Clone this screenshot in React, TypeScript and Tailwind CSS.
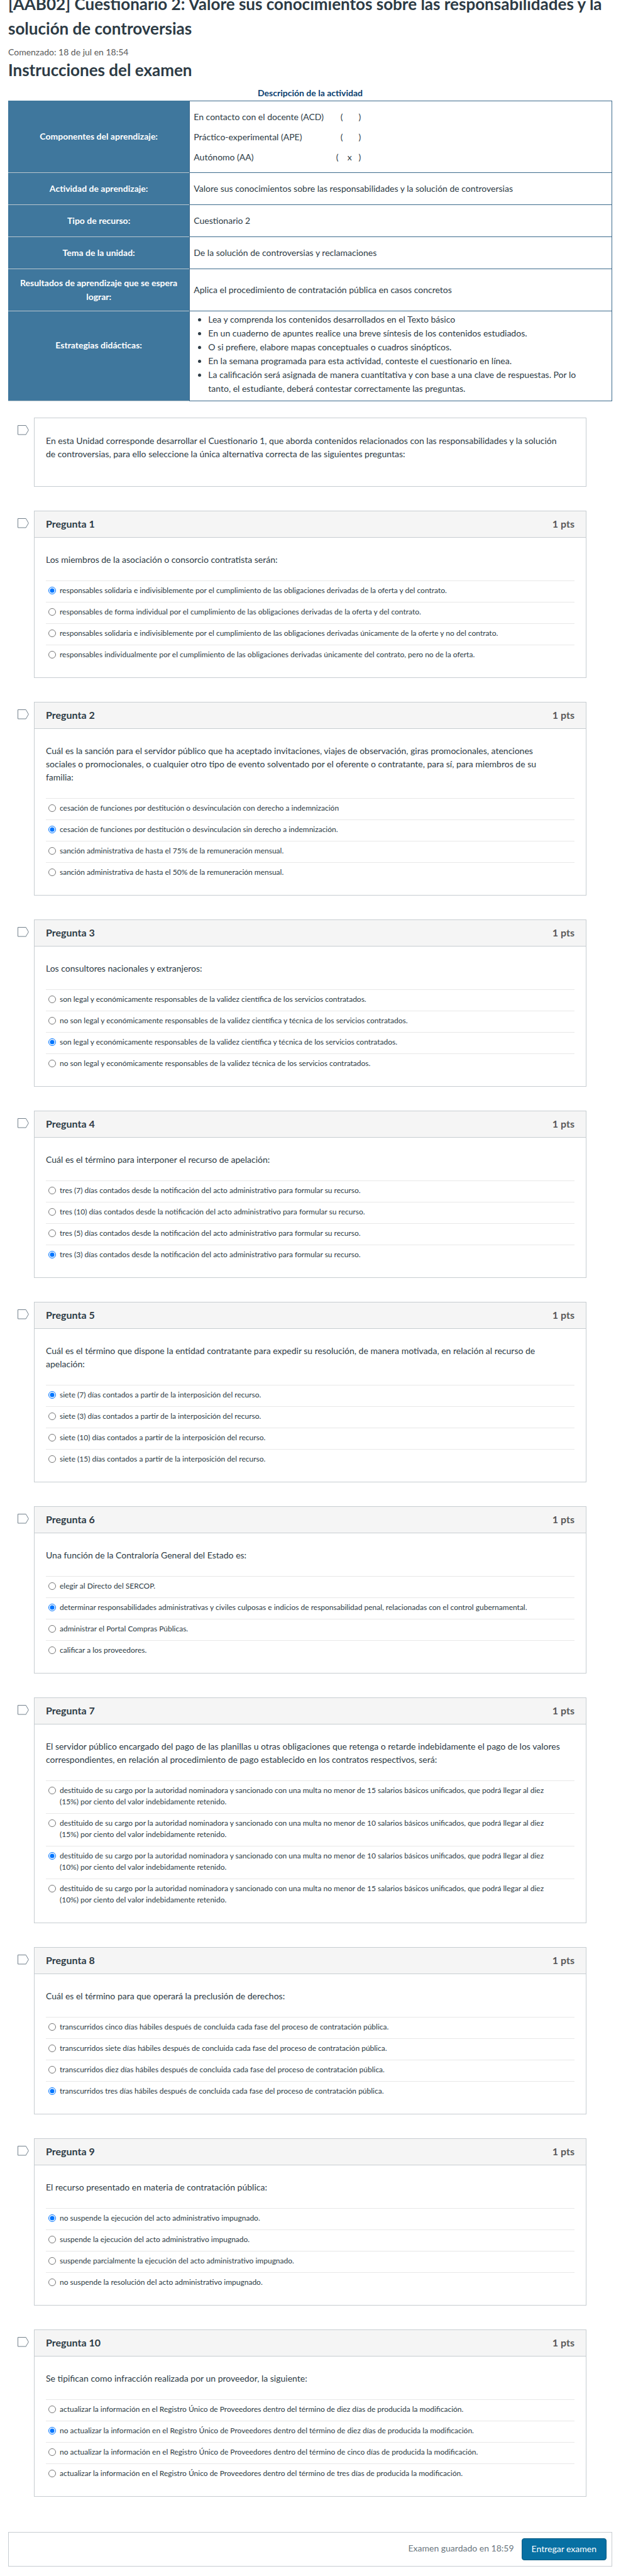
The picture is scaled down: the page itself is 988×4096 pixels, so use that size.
import { useState } from "react";
import type { ReactNode } from "react";

interface Question {
  id: number;
  text: string;
  options: string[];
  selected: number;
}

const questions: Question[] = [
  {
    id: 1,
    text: "Los miembros de la asociación o consorcio contratista serán:",
    options: [
      "responsables solidaria e indivisiblemente por el cumplimiento de las obligaciones derivadas de la oferta y del contrato.",
      "responsables de forma individual por el cumplimiento de las obligaciones derivadas de la oferta y del contrato.",
      "responsables solidaria e indivisiblemente por el cumplimiento de las obligaciones derivadas únicamente de la oferte y no del contrato.",
      "responsables individualmente por el cumplimiento de las obligaciones derivadas únicamente del contrato, pero no de la oferta.",
    ],
    selected: 0,
  },
  {
    id: 2,
    text: "Cuál es la sanción para el servidor público que ha aceptado invitaciones, viajes de observación, giras promocionales, atenciones sociales o promocionales, o cualquier otro tipo de evento solventado por el oferente o contratante, para sí, para miembros de su familia:",
    options: [
      "cesación de funciones por destitución o desvinculación con derecho a indemnización",
      "cesación de funciones por destitución o desvinculación sin derecho a indemnización.",
      "sanción administrativa de hasta el 75% de la remuneración mensual.",
      "sanción administrativa de hasta el 50% de la remuneración mensual.",
    ],
    selected: 1,
  },
  {
    id: 3,
    text: "Los consultores nacionales y extranjeros:",
    options: [
      "son legal y económicamente responsables de la validez científica de los servicios contratados.",
      "no son legal y económicamente responsables de la validez científica y técnica de los servicios contratados.",
      "son legal y económicamente responsables de la validez científica y técnica de los servicios contratados.",
      "no son legal y económicamente responsables de la validez técnica de los servicios contratados.",
    ],
    selected: 2,
  },
  {
    id: 4,
    text: "Cuál es el término para interponer el recurso de apelación:",
    options: [
      "tres (7) días contados desde la notificación del acto administrativo para formular su recurso.",
      "tres (10) días contados desde la notificación del acto administrativo para formular su recurso.",
      "tres (5) días contados desde la notificación del acto administrativo para formular su recurso.",
      "tres (3) días contados desde la notificación del acto administrativo para formular su recurso.",
    ],
    selected: 3,
  },
  {
    id: 5,
    text: "Cuál es el término que dispone la entidad contratante para expedir su resolución, de manera motivada, en relación al recurso de apelación:",
    options: [
      "siete (7) días contados a partir de la interposición del recurso.",
      "siete (3) días contados a partir de la interposición del recurso.",
      "siete (10) días contados a partir de la interposición del recurso.",
      "siete (15) días contados a partir de la interposición del recurso.",
    ],
    selected: 0,
  },
  {
    id: 6,
    text: "Una función de la Contraloría General del Estado es:",
    options: [
      "elegir al Directo del SERCOP.",
      "determinar responsabilidades administrativas y civiles culposas e indicios de responsabilidad penal, relacionadas con el control gubernamental.",
      "administrar el Portal Compras Públicas.",
      "calificar a los proveedores.",
    ],
    selected: 1,
  },
  {
    id: 7,
    text: "El servidor público encargado del pago de las planillas u otras obligaciones que retenga o retarde indebidamente el pago de los valores correspondientes, en relación al procedimiento de pago establecido en los contratos respectivos, será:",
    options: [
      "destituido de su cargo por la autoridad nominadora y sancionado con una multa no menor de 15 salarios básicos unificados, que podrá llegar al diez (15%) por ciento del valor indebidamente retenido.",
      "destituido de su cargo por la autoridad nominadora y sancionado con una multa no menor de 10 salarios básicos unificados, que podrá llegar al diez (15%) por ciento del valor indebidamente retenido.",
      "destituido de su cargo por la autoridad nominadora y sancionado con una multa no menor de 10 salarios básicos unificados, que podrá llegar al diez (10%) por ciento del valor indebidamente retenido.",
      "destituido de su cargo por la autoridad nominadora y sancionado con una multa no menor de 15 salarios básicos unificados, que podrá llegar al diez (10%) por ciento del valor indebidamente retenido.",
    ],
    selected: 2,
  },
  {
    id: 8,
    text: "Cuál es el término para que operará la preclusión de derechos:",
    options: [
      "transcurridos cinco días hábiles después de concluida cada fase del proceso de contratación pública.",
      "transcurridos siete días hábiles después de concluida cada fase del proceso de contratación pública.",
      "transcurridos diez días hábiles después de concluida cada fase del proceso de contratación pública.",
      "transcurridos tres días hábiles después de concluida cada fase del proceso de contratación pública.",
    ],
    selected: 3,
  },
  {
    id: 9,
    text: "El recurso presentado en materia de contratación pública:",
    options: [
      "no suspende la ejecución del acto administrativo impugnado.",
      "suspende la ejecución del acto administrativo impugnado.",
      "suspende parcialmente la ejecución del acto administrativo impugnado.",
      "no suspende la resolución del acto administrativo impugnado.",
    ],
    selected: 0,
  },
  {
    id: 10,
    text: "Se tipifican como infracción realizada por un proveedor, la siguiente:",
    options: [
      "actualizar la información en el Registro Único de Proveedores dentro del término de diez días de producida la modificación.",
      "no actualizar la información en el Registro Único de Proveedores dentro del término de diez días de producida la modificación.",
      "no actualizar la información en el Registro Único de Proveedores dentro del término de cinco días de producida la modificación.",
      "actualizar la información en el Registro Único de Proveedores dentro del término de tres días de producida la modificación.",
    ],
    selected: 1,
  },
];

const components = [
  { label: "En contacto con el docente (ACD)", mark: "(       )" },
  { label: "Práctico-experimental (APE)", mark: "(       )" },
  { label: "Autónomo (AA)", mark: "(    x   )" },
];

const strategies = [
  "Lea y comprenda los contenidos desarrollados en el Texto básico",
  "En un cuaderno de apuntes realice una breve síntesis de los contenidos estudiados.",
  "O si prefiere, elabore mapas conceptuales o cuadros sinópticos.",
  "En la semana programada para esta actividad, conteste el cuestionario en línea.",
  "La calificación será asignada de manera cuantitativa y con base a una clave de respuestas. Por lo tanto, el estudiante, deberá contestar correctamente las preguntas.",
];

function Row({
  label,
  labelClass = "",
  className = "",
  children,
}: {
  label: string;
  labelClass?: string;
  className?: string;
  children: ReactNode;
}) {
  return (
    <tr>
      <th
        scope="row"
        className={`w-[30%] border-b border-[#b9c6cd] bg-[#3f779d] px-3 font-bold text-white ${labelClass}`}
      >
        {label}
      </th>
      <td className={`border-x border-b border-[#3c6a8c] px-[6px] ${className}`}>
        {children}
      </td>
    </tr>
  );
}

function Flagged({ children }: { children: ReactNode }) {
  const [flagged, setFlagged] = useState(false);

  return (
    <div className="mb-[38px] flex items-start gap-2 pl-[15px] pr-[41px]">
      <button
        type="button"
        aria-label="Marcar pregunta"
        aria-pressed={flagged}
        onClick={() => setFlagged(!flagged)}
        className="mt-3 shrink-0"
      >
        <svg width="18" height="16" viewBox="0 0 18 16" className="block">
          <path
            d="M0.5 0.5H13.2L17.4 7.8L13.2 15H0.5Z"
            fill={flagged ? "#fc5e13" : "#fff"}
            stroke="#73818c"
          />
        </svg>
      </button>
      <div className="min-w-0 flex-1 border border-[#c7cdd1]">{children}</div>
    </div>
  );
}

function QuestionCard({ question }: { question: Question }) {
  const [selected, setSelected] = useState(question.selected);
  const textId = `texto-${question.id}`;

  return (
    <Flagged>
      <div className="flex h-[42px] items-center justify-between border-b border-[#c7cdd1] bg-[#f5f5f5] px-[18px] pb-[2px] text-base font-bold">
        <h3>Pregunta {question.id}</h3>
        <span className="text-[#595959]">1 pts</span>
      </div>
      <div
        role="radiogroup"
        aria-labelledby={textId}
        className="px-[18px] pb-[18px] pt-6"
      >
        <p id={textId} className="mb-[23px] mr-5">
          {question.text}
        </p>
        {question.options.map((option, i) => (
          <label
            key={i}
            className="flex items-start gap-[6px] border-t border-[#e8e8e8] pb-[9px] pl-1 pr-6 pt-[6px] text-xs leading-[18px]"
          >
            <input
              type="radio"
              name={`pregunta-${question.id}`}
              checked={selected === i}
              onChange={() => setSelected(i)}
              className="mt-[3px] size-3 shrink-0"
            />
            <span>{option}</span>
          </label>
        ))}
      </div>
    </Flagged>
  );
}

export default function App() {
  return (
    <main className="overflow-hidden bg-white pb-[15px] pl-[13px] pr-[14px] font-['Lato',sans-serif] text-[14px] leading-[21px] text-[#2d3b45]">
      <header>
        <h1 className="-mt-[13px] text-[26px] font-bold leading-[39px]">
          [AAB02] Cuestionario 2: Valore sus conocimientos sobre las
          responsabilidades y la solución de controversias
        </h1>
        <p className="mt-[7px] text-[#595959]">Comenzado: 18 de jul en 18:54</p>
        <h2 className="text-[26px] font-bold leading-9">
          Instrucciones del examen
        </h2>
      </header>

      <table className="mb-[26px] mt-2 w-full table-fixed border-separate border-spacing-0 leading-[22px]">
        <caption className="pb-px font-bold text-[#0b4170]">
          Descripción de la actividad
        </caption>
        <tbody>
          <Row
            label="Componentes del aprendizaje:"
            className="space-y-[10px] border-t pb-[13px] pt-[14px]"
          >
            {components.map((c) => (
              <div key={c.label} className="flex">
                <span className="w-[225px]">{c.label}</span>
                <span className="w-[41px] whitespace-pre text-right">
                  {c.mark}
                </span>
              </div>
            ))}
          </Row>
          <Row label="Actividad de aprendizaje:" className="py-[14px]">
            Valore sus conocimientos sobre las responsabilidades y la solución
            de controversias
          </Row>
          <Row label="Tipo de recurso:" className="py-[14px]">
            Cuestionario 2
          </Row>
          <Row label="Tema de la unidad:" className="py-[14px]">
            De la solución de controversias y reclamaciones
          </Row>
          <Row
            label="Resultados de aprendizaje que se espera lograr:"
            labelClass="py-[11px]"
          >
            Aplica el procedimiento de contratación pública en casos concretos
          </Row>
          <Row
            label="Estrategias didácticas:"
            labelClass="pb-[34px]"
            className="pb-2 pt-[2px]"
          >
            <ul className="list-disc pl-[23px] pr-6">
              {strategies.map((s) => (
                <li key={s}>{s}</li>
              ))}
            </ul>
          </Row>
        </tbody>
      </table>

      <Flagged>
        <p className="pb-[41px] pl-[18px] pr-11 pt-[25px]">
          En esta Unidad corresponde desarrollar el Cuestionario 1, que aborda
          contenidos relacionados con las responsabilidades y la solución de
          controversias, para ello seleccione la única alternativa correcta de
          las siguientes preguntas:
        </p>
      </Flagged>

      {questions.map((q) => (
        <QuestionCard key={q.id} question={q} />
      ))}

      <footer className="mt-14 flex items-center justify-end gap-3 border border-[#c7cdd1] px-2 py-[9px]">
        <span className="pb-1 text-[#6b7780]">Examen guardado en 18:59</span>
        <button
          type="button"
          className="rounded-sm border border-[#065a83] bg-[#0770a3] px-[15px] pb-[7px] pt-[5px] text-white"
        >
          Entregar examen
        </button>
      </footer>
    </main>
  );
}
